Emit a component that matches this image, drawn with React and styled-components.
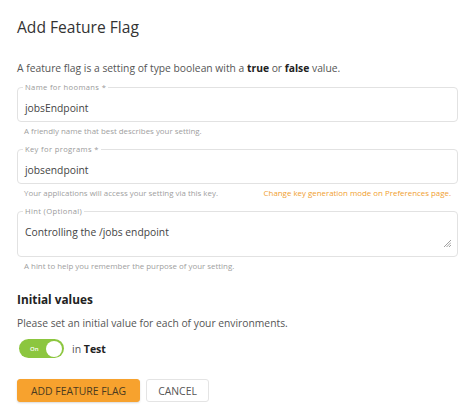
import React from 'react'
import styled, { createGlobalStyle } from 'styled-components';

const GlobalStyle = createGlobalStyle`
  html, body {
    margin: 0;
    padding: 0;
    background: #ffffff;
  }
  body {
    font-family: "Open Sans", "DejaVu Sans", sans-serif;
    color: #333333;
  }
  * { box-sizing: border-box; }
`;

//page and headings
const Page = styled.div`
  width: 474px;
  height: 415px;
  padding: 17px 16px 0 17px;
  display: flex;
  flex-direction: column;
`;

const Title = styled.h1`
  margin: 0;
  font-size: 15.6px;
  font-weight: 400;
  color: #333333;
  line-height: 20px;
`;

const Lead = styled.p`
  margin: ${p => p.tight ? '9px 0 0' : '24px 0 8px'};
  font-size: 10.3px;
  color: #555555;
  line-height: 14px;
  b { color: #222222; font-weight: 700; }
`;

const SubTitle = styled.h2`
  margin: 11px 0 0;
  font-size: 11.8px;
  font-weight: 700;
  color: #222222;
  line-height: 16px;
`;

//outlined fields
const Field = styled.fieldset`
  margin: 0;
  padding: 0 7px 0 6px;
  border: 1px solid #e2e2e2;
  border-radius: 4px;
  height: ${p => p.tall ? 50 : 39}px;
  min-width: 0;
  display: flex;
  flex-direction: column;
`;

const Legend = styled.legend`
  font-size: 7.6px;
  letter-spacing: 0.35px;
  color: #9a9a9a;
  padding: 0 2px;
  margin-left: -1px;
  line-height: 8px;
`;

const Value = styled.div`
  font-size: 10.3px;
  color: #444444;
  line-height: 14px;
  padding: 10px 0 0 1px;
`;

const Grip = styled.svg`
  align-self: flex-end;
  margin: auto -1px 7px 0;
  flex: none;
`;

const HelpRow = styled.div`
  display: flex;
  justify-content: space-between;
  padding: 4px 7px 9px 7px;
  font-size: 7.9px;
  line-height: 10px;
  color: #a0a0a0;
`;

const Link = styled.span`
  color: #f0a030;
`;

//toggle
const ToggleRow = styled.div`
  display: flex;
  align-items: center;
  gap: 8px;
  margin: 9px 0 0 2px;
  font-size: 10.5px;
  color: #555555;
  b { color: #222222; }
`;

const Track = styled.div`
  width: 45px;
  height: 19px;
  border-radius: 10px;
  background: #8cc63f;
  display: flex;
  align-items: center;
  justify-content: space-between;
  padding: 0 2px 0 11px;
`;

const TrackText = styled.span`
  font-size: 6px;
  color: #ffffff;
  font-weight: 600;
`;

const Knob = styled.span`
  width: 16px;
  height: 16px;
  border-radius: 50%;
  background: #ffffff;
`;

//buttons
const Actions = styled.div`
  display: flex;
  gap: 6px;
  margin-top: 21px;
`;

const Button = styled.button`
  height: 23px;
  padding: 0 ${p => p.primary ? 13 : 11}px;
  border-radius: 3px;
  font-family: inherit;
  font-size: 10.4px;
  font-weight: 500;
  color: ${p => p.primary ? '#4a3a20' : '#555555'};
  background: ${p => p.primary ? '#f7a22e' : '#ffffff'};
  border: 1px solid ${p => p.primary ? '#f7a22e' : '#e4e4e4'};
  box-shadow: ${p => p.primary ? '0 1px 2px rgba(0,0,0,0.15)' : 'none'};
`;

function OutlinedInput({ label, value, tall }) {
  return (
    <Field tall={tall}>
      <Legend>{label}</Legend>
      <Value>{value}</Value>
      {tall && (
        <Grip width="8" height="8" viewBox="0 0 8 8">
          <path d="M1 8 L8 1 M3.5 8 L8 3.5 M6 8 L8 6" stroke="#888" strokeWidth="0.8" />
        </Grip>
      )}
    </Field>
  );
}

function App() {
  return (
    <Page>
      <GlobalStyle />
      <Title>Add Feature Flag</Title>
      <Lead>
        A feature flag is a setting of type boolean with a <b>true</b> or <b>false</b> value.
      </Lead>

      <OutlinedInput label="Name for hoomans *" value="jobsEndpoint" />
      <HelpRow>
        <span>A friendly name that best describes your setting.</span>
      </HelpRow>

      <OutlinedInput label="Key for programs *" value="jobsendpoint" />
      <HelpRow>
        <span>Your applications will access your setting via this key.</span>
        <Link>Change key generation mode on Preferences page.</Link>
      </HelpRow>

      <OutlinedInput label="Hint (Optional)" value="Controlling the /jobs endpoint" tall />
      <HelpRow>
        <span>A hint to help you remember the purpose of your setting.</span>
      </HelpRow>

      <SubTitle>Initial values</SubTitle>
      <Lead tight>
        Please set an initial value for each of your environments.
      </Lead>
      <ToggleRow>
        <Track>
          <TrackText>On</TrackText>
          <Knob />
        </Track>
        <span>in <b>Test</b></span>
      </ToggleRow>

      <Actions>
        <Button primary>ADD FEATURE FLAG</Button>
        <Button>CANCEL</Button>
      </Actions>
    </Page>
  );
}

export default App;
